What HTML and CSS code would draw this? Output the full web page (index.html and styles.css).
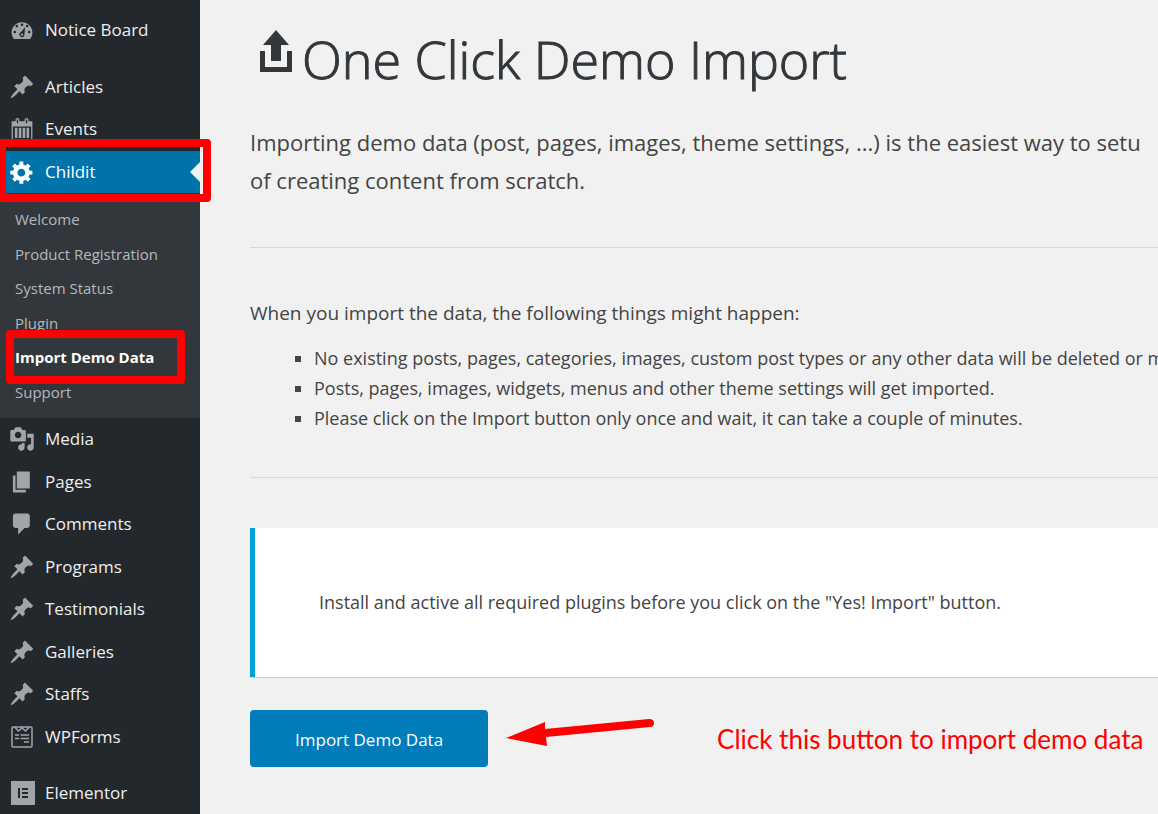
FILE: index.html
```html
<!DOCTYPE html>
<html lang="en">
<head>
<meta charset="utf-8">
<meta name="viewport" content="width=device-width, initial-scale=1">
<title>One Click Demo Import</title>
<link rel="stylesheet" href="styles.css">
</head>
<body>
<svg class="sprite" aria-hidden="true">
  <symbol id="pin" viewBox="0 0 20 20"><path d="M10.44 3.02l1.82-1.82 6.36 6.35-1.83 1.82c-1.05-.68-2.48-.57-3.41.36l-.75.75c-.92.93-1.04 2.35-.35 3.41l-1.83 1.82-2.41-2.41-2.8 2.79c-.42.42-3.38 2.71-3.8 2.29s1.86-3.39 2.28-3.81l2.79-2.79L4.1 9.36l1.83-1.82c1.05.69 2.48.57 3.4-.36l.75-.75c.93-.92 1.05-2.35.36-3.41z"/></symbol>
  <symbol id="gauge" viewBox="0 0 20 20"><path fill-rule="evenodd" d="M3.76 17h12.48c1.1-1.37 1.76-3.11 1.76-5 0-4.42-3.58-8-8-8s-8 3.58-8 8c0 1.89.66 3.63 1.76 5zM10 5c.55 0 1 .45 1 1s-.45 1-1 1-1-.45-1-1 .45-1 1-1zM6 6c.55 0 1 .45 1 1s-.45 1-1 1-1-.45-1-1 .45-1 1-1zM14 6c.55 0 1 .45 1 1s-.45 1-1 1-1-.45-1-1 .45-1 1-1zM4.500 10.500c.55 0 1 .45 1 1s-.45 1-1 1-1-.45-1-1 .45-1 1-1zM15.500 10.500c.55 0 1 .45 1 1s-.45 1-1 1-1-.45-1-1 .45-1 1-1zM12.400 7.600L11.900 13.400c0 1.200-.8 2.100-1.900 2.100s-2-.9-2-2c0-.9.5-1.600 1.300-1.900zM10 12.700c-.5 0-.9.4-.9.900s.4.900.9.900.9-.4.900-.9-.4-.9-.9-.9z"/></symbol>
  <symbol id="calendar" viewBox="0 0 20 20"><path fill-rule="evenodd" d="M15 4h3v15H2V4h3V3c0-.83.67-1.500 1.500-1.500S8 2.170 8 3v1h4V3c0-.83.67-1.500 1.500-1.500S15 2.170 15 3zM6 3v2.500h1V3c0-.6-1-.6-1 0zM13 3v2.500h1V3c0-.6-1-.6-1 0zM17 18V8H3v10zM4.500 9h2v8h-2zM7.500 9h2v8h-2zM10.500 9h2v8h-2zM13.500 9h2v8h-2z"/></symbol>
  <symbol id="gear" viewBox="0 0 20 20"><path d="M18 12h-2.180c-.17.7-.44 1.350-.81 1.930l1.540 1.540-2.100 2.100-1.540-1.540c-.58.36-1.230.63-1.910.79V19H8v-2.180c-.68-.16-1.330-.43-1.910-.79l-1.540 1.540-2.120-2.120 1.540-1.540c-.36-.58-.63-1.230-.79-1.910H1V9.030h2.170c.16-.7.44-1.350.8-1.940L2.430 5.550l2.100-2.100 1.540 1.540c.58-.37 1.240-.64 1.930-.81V2h3v2.180c.68.16 1.330.43 1.910.79l1.540-1.540 2.120 2.120-1.540 1.540c.36.59.64 1.240.8 1.940H18V12zm-8.500 1.500c1.660 0 3-1.340 3-3s-1.340-3-3-3-3 1.340-3 3 1.340 3 3 3z"/></symbol>
  <symbol id="media" viewBox="0 0 20 20"><path fill-rule="evenodd" d="M13 11V4c0-.55-.45-1-1-1h-1.670L9 1H5L3.670 3H2c-.55 0-1 .45-1 1v7c0 .55.45 1 1 1h10c.55 0 1-.45 1-1zM7 4.500c1.380 0 2.500 1.120 2.500 2.500S8.380 9.500 7 9.500 4.500 8.380 4.500 7 5.620 4.500 7 4.500zM14 6h5v10.500c0 1.380-1.120 2.500-2.500 2.500S14 17.880 14 16.500s1.120-2.500 2.500-2.500c.17 0 .34.02.5.050V9h-3zM10 14.050V13h2v3.500c0 1.380-1.120 2.500-2.500 2.500S7 17.880 7 16.500 8.120 14 9.500 14c.17 0 .34.020.5.050z"/></symbol>
  <symbol id="pages" viewBox="0 0 20 20"><path d="M6 15V2h10v13H6zm-1 1h8v2H3V5h2v11z"/></symbol>
  <symbol id="comment" viewBox="0 0 20 20"><path d="M5 2h9c1.100 0 2 .9 2 2v7c0 1.100-.9 2-2 2h-2l-5 5v-5H5c-1.100 0-2-.9-2-2V4c0-1.100.9-2 2-2z"/></symbol>
  <symbol id="form" viewBox="-1 -1 26 26"><path fill="none" stroke="currentColor" stroke-width="1.500" d="M3 2h18q1 0 1 1v18q0 1-1 1H3q-1 0-1-1V3q0-1 1-1zM5 2.500l3.500 3.500L12 3l3.500 3L19 2.500M5 10h4M10.500 10H19M5 13.500h4M10.500 13.500H19M14 17h5"/></symbol>
  <symbol id="elementor" viewBox="-2 -1 26 26"><path fill-rule="evenodd" d="M0 0h24v24H0zM7 7v10h2V7zM11 7v2h6V7zM11 11v2h6v-2zM11 15v2h6v-2z"/></symbol>
</svg>
<div class="layout">
  <nav class="sidebar" aria-label="Main menu">
    <ul class="menu">
      <li><a class="item" href="#"><svg class="icon"><use href="#gauge"/></svg>Notice Board</a></li>
      <li class="spaced"><a class="item" href="#"><svg class="icon"><use href="#pin"/></svg>Articles</a></li>
      <li><a class="item" href="#"><svg class="icon"><use href="#calendar"/></svg>Events</a></li>
      <li>
        <div class="marked">
          <a class="item current" href="#"><svg class="icon"><use href="#gear"/></svg>Childit</a>
          <span class="mark mark-menu"></span>
        </div>
        <ul class="submenu">
          <li><a href="#">Welcome</a></li>
          <li><a href="#">Product Registration</a></li>
          <li><a href="#">System Status</a></li>
          <li><a href="#">Plugin</a></li>
          <li class="marked"><a class="active" href="#" aria-current="page">Import Demo Data</a><span class="mark mark-sub"></span></li>
          <li><a href="#">Support</a></li>
        </ul>
      </li>
      <li><a class="item" href="#"><svg class="icon"><use href="#media"/></svg>Media</a></li>
      <li><a class="item" href="#"><svg class="icon"><use href="#pages"/></svg>Pages</a></li>
      <li><a class="item" href="#"><svg class="icon"><use href="#comment"/></svg>Comments</a></li>
      <li><a class="item" href="#"><svg class="icon"><use href="#pin"/></svg>Programs</a></li>
      <li><a class="item" href="#"><svg class="icon"><use href="#pin"/></svg>Testimonials</a></li>
      <li><a class="item" href="#"><svg class="icon"><use href="#pin"/></svg>Galleries</a></li>
      <li><a class="item" href="#"><svg class="icon"><use href="#pin"/></svg>Staffs</a></li>
      <li><a class="item" href="#"><svg class="icon"><use href="#form"/></svg>WPForms</a></li>
      <li class="spaced"><a class="item" href="#"><svg class="icon"><use href="#elementor"/></svg>Elementor</a></li>
    </ul>
  </nav>
  <main class="content">
    <h1 class="title">
      <svg class="title-icon" viewBox="0 0 32 42" aria-hidden="true"><path d="M16 0l13 15h-8v16H11V15H3zM0 21h5v16h22V21h5v21H0z"/></svg>
      One Click Demo Import
    </h1>
    <p class="intro">Importing demo data (post, pages, images, theme settings, ...) is the easiest way to setu<br>of creating content from scratch.</p>
    <hr class="rule">
    <p class="lead">When you import the data, the following things might happen:</p>
    <ul class="notes">
      <li>No existing posts, pages, categories, images, custom post types or any other data will be deleted or mo</li>
      <li>Posts, pages, images, widgets, menus and other theme settings will get imported.</li>
      <li>Please click on the Import button only once and wait, it can take a couple of minutes.</li>
    </ul>
    <hr class="rule">
    <div class="notice"><p>Install and active all required plugins before you click on the "Yes! Import" button.</p></div>
    <div class="actions">
      <button class="import" type="button">Import Demo Data</button>
      <svg class="arrow" viewBox="0 0 148 30" aria-hidden="true"><path d="M0 20L39 4v7L143 1q5 0 5 4t-4 4L40 19l1 9z"/></svg>
      <p class="hint">Click this button to import demo data</p>
    </div>
  </main>
</div>
</body>
</html>
```
FILE: styles.css
```css
* { box-sizing: border-box; }

body {
  margin: 0;
  background: #f1f1f1;
  color: #444;
  font-family: "Open Sans", "Noto Sans", sans-serif;
  overflow: hidden;
}

ul, p, h1 { margin: 0; padding: 0; }

.sprite { display: none; }

.layout {
  display: flex;
  height: 100vh;
}

.sidebar {
  flex: 0 0 200px;
  background: #23282d;
  padding-top: 9px;
}

.menu, .submenu { list-style: none; }

.spaced { margin-top: 14px; }

.item {
  display: flex;
  align-items: center;
  gap: 10px;
  padding-left: 9px;
  color: #eee;
  font-size: 17px;
  line-height: 2.5;
  text-decoration: none;
}

.icon {
  width: 26px;
  height: 26px;
  color: #a0a5aa;
  fill: currentColor;
}

.current {
  position: relative;
  background: #0073aa;
  color: #fff;
}

.current .icon { color: #fff; }

.current::after {
  content: "";
  position: absolute;
  right: 0;
  top: 11px;
  border: 10px solid transparent;
  border-left: 0;
  border-right-color: #f1f1f1;
}

.submenu {
  background: #32373c;
  padding: 9px 0;
  font-size: 15px;
  line-height: 2.3;
}

.submenu a {
  display: block;
  padding-left: 15px;
  color: #b4b9be;
  text-decoration: none;
}

.submenu .active {
  color: #fff;
  font-weight: 700;
}

.marked { position: relative; }

.mark {
  position: absolute;
  z-index: 1;
  border: 8px solid #f00;
  border-radius: 4px;
  pointer-events: none;
}

.mark-menu { inset: -12px -11px -9px -2px; }

.mark-sub { inset: -10px 15px -9px 6px; }

.content {
  flex: 1;
  min-width: 0;
  overflow: hidden;
  padding: 24px 0 0 50px;
  white-space: nowrap;
}

.title {
  display: flex;
  align-items: flex-start;
  gap: 10px;
  padding-left: 10px;
  color: #32373c;
  font-size: 52px;
  font-weight: 300;
  line-height: 70px;
  -webkit-text-stroke: 1px #32373c;
}

.title-icon {
  width: 32px;
  height: 42px;
  margin-top: 6px;
  fill: currentColor;
}

.intro {
  margin-top: 29px;
  font-size: 22px;
  line-height: 38px;
}

.rule {
  margin: 48px 0 50px;
  border: 0;
  border-top: 1px solid #d9d9d9;
}

.lead {
  font-size: 19px;
  line-height: 30px;
}

.notes {
  margin-top: 15px;
  padding-left: 64px;
  font-size: 18px;
  line-height: 30px;
  list-style: square;
}

.notes + .rule { margin-top: 44px; }

.notice {
  padding: 60px 64px;
  background: #fff;
  border-left: 5px solid #00a0d2;
  box-shadow: 0 1px 1px #0002;
  font-size: 18px;
  line-height: 29px;
}

.actions {
  display: flex;
  align-items: center;
  margin-top: 33px;
}

.import {
  padding: 15px 45px 13px;
  border: 0;
  border-radius: 4px;
  background: #007cba;
  color: #fff;
  font: inherit;
  font-size: 17px;
  line-height: 29px;
}

.arrow {
  width: 148px;
  height: 30px;
  margin: 0 63px 12px 18px;
  fill: #f00;
}

.hint {
  color: #f00;
  font-family: Lato, "Open Sans", sans-serif;
  font-size: 26px;
  line-height: 38px;
}
```
